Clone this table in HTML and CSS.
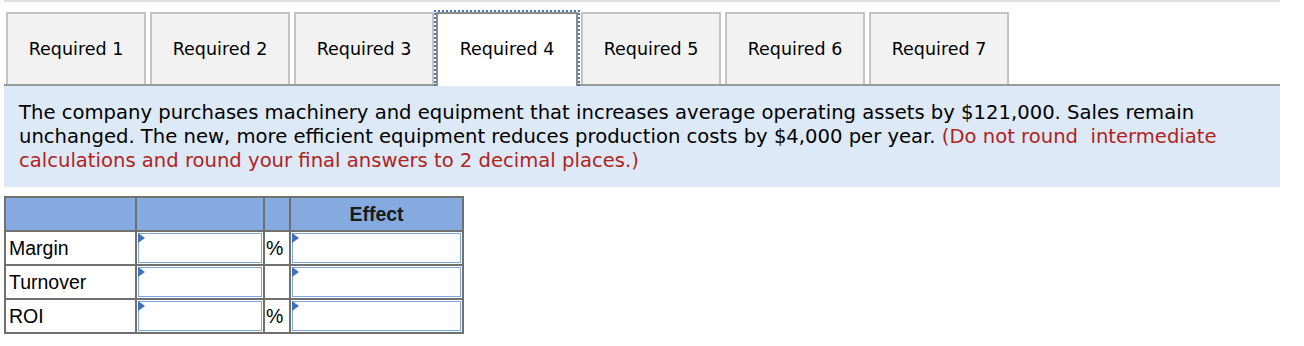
FILE: index.html
```html
<!DOCTYPE html>
<html lang="en">
<head>
    <meta charset="UTF-8">
    <title>Required 4</title>
    <link rel="stylesheet" href="styles.css">
</head>
<body>
    <div class="page">
        <div class="top-rule"></div>

        <!-- Tabs -->
        <ul class="tabs">
            <li class="tab">Required 1</li>
            <li class="tab">Required 2</li>
            <li class="tab">Required 3</li>
            <li class="tab active">Required 4</li>
            <li class="tab">Required 5</li>
            <li class="tab">Required 6</li>
            <li class="tab">Required 7</li>
        </ul>

        <div class="question">
            The company purchases machinery and equipment that increases average operating assets by $121,000. Sales remain
            unchanged. The new, more efficient equipment reduces production costs by $4,000 per year.
            <span class="hint">(Do not round &nbsp;intermediate calculations and round your final answers to 2 decimal places.)</span>
        </div>

        <table class="answers">
            <thead>
                <tr>
                    <th class="label-col"></th>
                    <th class="value-col"></th>
                    <th class="unit-col"></th>
                    <th class="effect-col">Effect</th>
                </tr>
            </thead>
            <tbody>
                <tr>
                    <td>Margin</td>
                    <td class="cell"><input type="text" class="field"></td>
                    <td class="unit">%</td>
                    <td class="cell"><input type="text" class="field"></td>
                </tr>
                <tr>
                    <td>Turnover</td>
                    <td class="cell"><input type="text" class="field"></td>
                    <td class="unit"></td>
                    <td class="cell"><input type="text" class="field"></td>
                </tr>
                <tr>
                    <td>ROI</td>
                    <td class="cell"><input type="text" class="field"></td>
                    <td class="unit">%</td>
                    <td class="cell"><input type="text" class="field"></td>
                </tr>
            </tbody>
        </table>
    </div>
</body>
</html>
```

FILE: styles.css
```css
body {
    margin: 0;
    background: #ffffff;
    color: #000000;
    font-family: "DejaVu Sans", Verdana, sans-serif;
}
.page {
    width: 1276px;
    margin-left: 4px;
}
.top-rule {
    height: 2px;
    background: #e0e0e0;
}
.tabs {
    list-style: none;
    margin: 0;
    padding: 10px 0 0 2px;
    display: flex;
    gap: 4px;
    border-bottom: 2px solid #999999;
}
.tab {
    box-sizing: border-box;
    width: 140px;
    height: 72px;
    margin-top: 0;
    border: 2px solid #c4c4c4;
    border-bottom: none;
    background: #f2f2f2;
    font-size: 17.5px;
    display: flex;
    align-items: center;
    justify-content: center;
}
/* selected tab: grey frame inside a dotted focus ring, open at the bottom */
.tab.active {
    width: 146px;
    height: 76px;
    margin: -2px -3px -2px -4px;
    background: #ffffff;
    border: 2px dotted #4a76b8;
    border-bottom: none;
    box-shadow: inset 2px 2px 0 #8c8c8c, inset -2px 0 0 #8c8c8c;
}
.question {
    background: #dde9f7;
    padding: 15px 15px 14px;
    font-size: 19.6px;
    line-height: 24px;
}
.hint {
    color: #b0231f;
}
.answers {
    margin-top: 9px;
    border-collapse: collapse;
    font-family: "Liberation Sans", Arial, sans-serif;
    font-size: 19.5px;
}
.answers th,
.answers td {
    border: 2px solid #707070;
    padding: 0;
    height: 30px;
}
.answers th {
    background: #84aadf;
    height: 32px;
    font-weight: bold;
    color: #1a1a1a;
}
.answers td {
    padding-left: 3px;
}
.label-col { width: 129px; }
.value-col { width: 126px; }
.unit-col { width: 24px; }
.effect-col { width: 171px; }
.answers td.cell {
    padding: 1px;
    position: relative;
}
.answers td.unit {
    padding: 0 1px;
}
.field {
    box-sizing: border-box;
    display: block;
    width: 100%;
    height: 30px;
    border: 1px solid #7ea6dc;
    background: #ffffff;
    margin: 0;
    padding: 0 4px;
}
/* small blue corner marker on each entry cell */
.cell::before {
    content: "";
    position: absolute;
    top: 1px;
    left: 1px;
    border-top: 5px solid transparent;
    border-bottom: 5px solid transparent;
    border-left: 7px solid #3f6fbf;
}
```
